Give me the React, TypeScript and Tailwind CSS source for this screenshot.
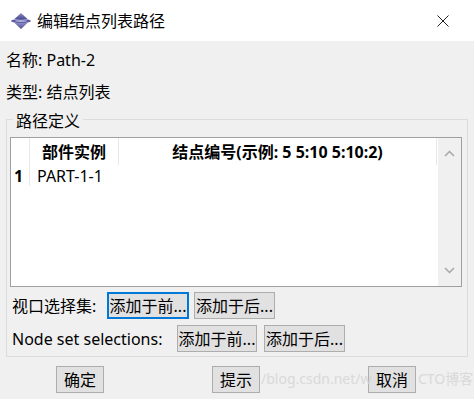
import React from "react";

function Btn({ children, className = "", focused = false }: { children: React.ReactNode; className?: string; focused?: boolean }) {
  return (
    <div
      className={
        "h-[27px] flex items-center justify-center bg-[#e1e1e1] text-[16px] leading-[20px] text-black border " +
        (focused ? "border-[#0078d7] shadow-[inset_0_0_0_1px_#0078d7] " : "border-[#adadad] ") +
        className
      }
    >
      {children}
    </div>
  );
}

export default function App() {
  return (
    <div className="relative w-[474px] h-[399px] overflow-hidden bg-[#f0f0f0] text-black text-[16px] font-['Noto_Sans','Noto_Sans_CJK_SC',sans-serif]">
      {/* title bar */}
      <div className="h-[41px] bg-white flex items-center pl-[11px]">
        <svg width="20" height="16" viewBox="0 0 20 16">
          <defs>
            <linearGradient id="ig" x1="0" y1="0" x2="0" y2="1">
              <stop offset="0" stopColor="#8a8ac4" />
              <stop offset="1" stopColor="#4e4e94" />
            </linearGradient>
          </defs>
          <path d="M10 0 L16.5 6 L3.5 6 Z" fill="url(#ig)" />
          <ellipse cx="10" cy="8" rx="10" ry="2" fill="#5c5ca4" />
          <ellipse cx="10" cy="8" rx="6" ry="0.8" fill="#c8c8e8" />
          <path d="M3.5 10 L16.5 10 L10 16 Z" fill="url(#ig)" />
        </svg>
        <span className="ml-[6px] text-[16px] leading-[20px]">编辑结点列表路径</span>
        <svg className="ml-auto mr-[25px]" width="12" height="12" viewBox="0 0 12 12">
          <path d="M0.5 0.5 L11.5 11.5 M11.5 0.5 L0.5 11.5" stroke="#222" strokeWidth="1" />
        </svg>
      </div>

      <div className="px-[6px] pt-[9px]">
        <div className="h-[20px] leading-[20px]">名称: Path-2</div>
        <div className="mt-[12px] h-[20px] leading-[20px]">类型: 结点列表</div>

        {/* group box */}
        <div className="relative mt-[17px] border border-[#dcdcdc] pt-[17px] pl-[3px] pr-[5px] pb-[4px]">
          <span className="absolute left-[6px] top-[-9px] px-[3px] bg-[#f0f0f0] leading-[20px]">路径定义</span>

          {/* table */}
          <div className="h-[150px] border border-[#a0a0a0] bg-white flex">
            <div className="flex-1 flex flex-col">
              <div className="h-[27px] flex font-bold">
                <div className="w-[19px] border-r border-[#e8e8e8]" />
                <div className="w-[89px] border-r border-[#e8e8e8] flex items-center justify-center leading-[20px]">部件实例</div>
                <div className="flex-1 border-r border-[#e8e8e8] flex items-center justify-center leading-[20px]">结点编号(示例: 5 5:10 5:10:2)</div>
              </div>
              <div className="h-[21px] flex">
                <div className="w-[19px] border-r border-[#e8e8e8] flex items-center justify-center font-bold leading-[20px] pr-[3px]">1</div>
                <div className="pl-[7px] flex items-center leading-[20px]">PART-1-1</div>
              </div>
            </div>
            <div className="w-[23px] ml-[1px] bg-[#f0f0f0] flex flex-col items-center justify-between py-[12px]">
              <svg width="11" height="7" viewBox="0 0 11 7">
                <path d="M1 6 L5.5 1.5 L10 6" fill="none" stroke="#a6a6a6" strokeWidth="1.5" />
              </svg>
              <svg width="11" height="7" viewBox="0 0 11 7">
                <path d="M1 1 L5.5 5.5 L10 1" fill="none" stroke="#a6a6a6" strokeWidth="1.5" />
              </svg>
            </div>
          </div>

          <div className="mt-[5px] flex items-center pl-[2px]">
            <span className="w-[95px] leading-[20px]">视口选择集:</span>
            <Btn focused className="w-[82px]">添加于前...</Btn>
            <Btn className="w-[81px] ml-[5px]">添加于后...</Btn>
          </div>
          <div className="mt-[6px] flex items-center pl-[2px]">
            <span className="w-[165px] leading-[20px]">Node set selections:</span>
            <Btn className="w-[80px]">添加于前...</Btn>
            <Btn className="w-[81px] ml-[7px]">添加于后...</Btn>
          </div>
        </div>

        <div className="mt-[9px] flex pl-[50px] gap-[108px]">
          <Btn className="w-[48px]">确定</Btn>
          <Btn className="w-[48px]">提示</Btn>
          <Btn className="w-[48px]">取消</Btn>
        </div>
      </div>

      <span className="absolute left-[261px] top-[369px] text-[14px] leading-[20px] text-[#d4d4d4] opacity-80 whitespace-nowrap">/blog.csdn.net/w</span>
      <span className="absolute left-[418px] top-[369px] text-[14px] leading-[20px] text-[#d4d4d4] opacity-80 whitespace-nowrap">CTO博客</span>
    </div>
  );
}
